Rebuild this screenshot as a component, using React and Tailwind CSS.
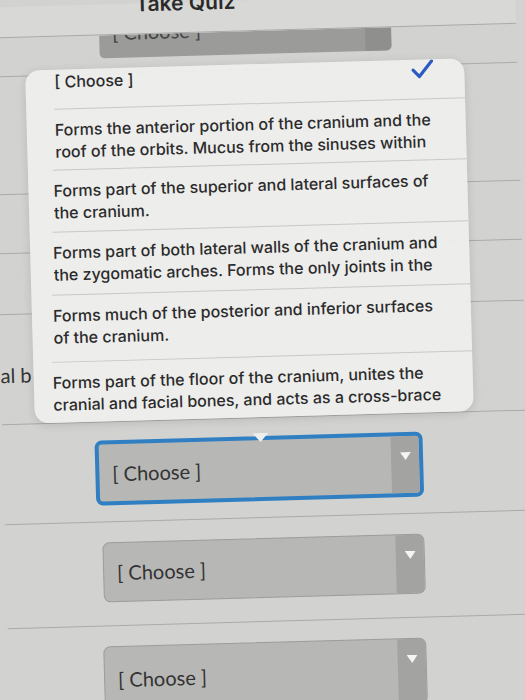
// Canvas quiz page on iPad, select popover open
const options = [
  { h: 'h-[61px]', pl: 'ml-[28px]', lines: ['Forms the anterior portion of the cranium and the', 'roof of the orbits. Mucus from the sinuses within'] },
  { h: 'h-[62px]', pl: 'ml-[25px]', lines: ['Forms part of the superior and lateral surfaces of', 'the cranium.'] },
  { h: 'h-[63px]', pl: 'ml-[23px]', lines: ['Forms part of both lateral walls of the cranium and', 'the zygomatic arches. Forms the only joints in the'] },
  { h: 'h-[67px]', pl: 'ml-[21px]', lines: ['Forms much of the posterior and inferior surfaces', 'of the cranium.'] },
  { h: 'h-[61px]', pl: 'ml-[19px]', lines: ['Forms part of the floor of the cranium, unites the', 'cranial and facial bones, and acts as a cross-brace'] },
]

function Arrow() {
  return (
    <svg width="11" height="8" viewBox="0 0 11 8">
      <path d="M0 0 H11 L5.5 8 Z" fill="#f4f4f4" />
    </svg>
  )
}

function Select({ className, focused }) {
  return (
    <div className={`flex overflow-hidden rounded-[7px] bg-[#b7b7b5] ${focused ? 'border-4 border-[#2f7fc2]' : 'border border-[#9c9c9a]'} ${className}`}>
      <div className="flex flex-1 items-center pl-[13px] text-[20px] leading-[24px] text-[#333]">[ Choose ]</div>
      <div className="flex w-[28px] justify-center bg-[#a3a3a1] pt-[16px]">
        <Arrow />
      </div>
    </div>
  )
}

export default function App() {
  return (
    <div className="h-[700px] w-[525px] overflow-hidden bg-[#d2d2d0]">
      <div className="relative h-[700px] w-[525px] rotate-[-1.6deg] bg-[#d2d2d0] font-['Lato',sans-serif] text-[#333]">
        {/* header */}
        <header className="relative z-10 flex h-[31px] items-start border-b border-[#a9a9a7] bg-[#d8d8d6]">
          <h1 className="-mt-[9px] pl-[145px] font-['Inter',sans-serif] text-[21px] leading-[20px] font-semibold text-[#2a2a2a]">Take Quiz</h1>
        </header>

        {/* page rows behind the popover */}
        <div className="h-[39px] border-b border-[#aaaaa8]">
          <div className="ml-[108px] flex h-[23px] w-[292px] overflow-hidden rounded-b-[5px] bg-[#9b9b99]">
            <div className="flex-1 pl-[13px]">
              <div className="-mt-[15px] text-[20px] leading-[24px] text-[#444]">[ Choose ]</div>
            </div>
            <div className="w-[26px] bg-[#8f8f8d]" />
          </div>
        </div>
        <div className="h-[118px] border-b border-[#aaaaa8]" />
        <div className="h-[59px] border-b border-[#aaaaa8]" />
        <div className="h-[61px] border-b border-[#aaaaa8]" />
        <div className="h-[110px] border-b border-[#aaaaa8] pt-[48px]">
          <div className="text-[20px] leading-[24px] text-[#333]">al b</div>
        </div>
        <div className="h-[100px] border-b border-[#aaaaa8] pt-[18px]">
          <Select focused className="ml-[92px] h-[65px] w-[328px]" />
        </div>
        <div className="h-[104px] border-b border-[#aaaaa8] pt-[20px]">
          <Select className="ml-[97px] h-[60px] w-[322px]" />
        </div>
        <div className="pt-[20px]">
          <Select className="ml-[95px] h-[66px] w-[323px]" />
        </div>

        {/* popover */}
        <div className="absolute left-[33px] top-[64px] z-20 w-[439px] overflow-hidden rounded-[14px] bg-[#eeeeec]/95 font-['Inter',sans-serif] text-[16px] leading-[22px] font-medium text-[#2b2b2b] shadow-[0_2px_10px_rgba(0,0,0,0.12)]">
          <div className="flex h-[39px] items-start justify-between pl-[29px] pr-[31px]">
            <span className="pt-[1px]">[ Choose ]</span>
            <svg width="22" height="20" viewBox="0 0 22 20" className="mt-[0px]">
              <path d="M1.8 10.5 L8 17 L20.5 1.8" fill="none" stroke="#2b5bc0" strokeWidth="3.2" strokeLinecap="round" strokeLinejoin="round" />
            </svg>
          </div>
          {options.map((o, i) => (
            <div key={i} className={`${o.h} ${o.pl} overflow-hidden border-t border-[#c8c8c6] pt-[9px]`}>
              {o.lines.map((l, j) => (
                <div key={j} className="whitespace-nowrap">{l}</div>
              ))}
            </div>
          ))}
        </div>

        {/* popover pointer */}
        <svg width="16" height="9" viewBox="0 0 16 9" className="absolute left-[250px] top-[433px] z-20">
          <path d="M0 0 H16 L8 9 Z" fill="#efefed" />
        </svg>
      </div>
    </div>
  )
}
